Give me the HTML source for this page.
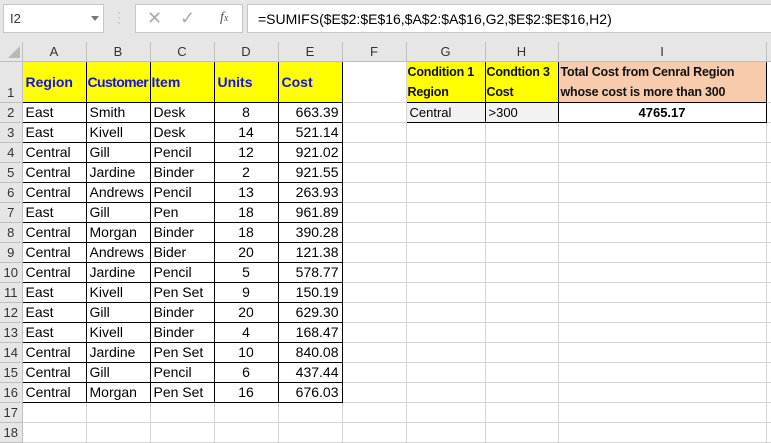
<!DOCTYPE html>
<html><head><meta charset="utf-8"><style>
body{margin:0;width:771px;height:434px;overflow:hidden;background:#fff;font-family:"Liberation Sans",Arial,sans-serif;position:relative}
.top{position:absolute;left:0;top:0;width:771px;height:42px;background:#e6e6e6}
.box{position:absolute;background:#fff;border:1px solid #c6c6c6;box-sizing:border-box}
table{position:absolute;left:0;top:42px;border-collapse:collapse;table-layout:fixed;width:771px}
td{border:1px solid #d4d4d4;padding:0 3px;font-size:14px;height:19px;white-space:nowrap;overflow:hidden;line-height:19px}
tr.h td{background:#e6e6e6;color:#333;text-align:center;font-size:13px;border-color:#bfbfbf;border-top:none}
td.rh{background:#e6e6e6;color:#333;text-align:center;font-size:13px;border-color:#bfbfbf;padding:0;border-left:none}
.b{border:1px solid #000}
.y{background:#ffff00}
.hb{color:#1010ff;font-weight:bold}
.r{text-align:right}.c{text-align:center}
.g{font-weight:bold;font-size:12.5px;line-height:20px;white-space:normal;vertical-align:bottom;color:#111;padding:0 1px;letter-spacing:-0.2px}
</style></head><body>
<div class="top">
 <div class="box" style="left:3px;top:4px;width:101px;height:29px"><span style="position:absolute;left:6px;top:6px;font-size:13px;color:#333">I2</span><span style="position:absolute;left:87px;top:11px;border-left:4px solid transparent;border-right:4px solid transparent;border-top:5px solid #777"></span></div>
 <span style="position:absolute;left:117px;top:10px;color:#aaa;font-size:12px;line-height:5px">·<br>·<br>·</span>
 <div class="box" style="left:135px;top:4px;width:108px;height:29px">
  <span style="position:absolute;left:11px;top:3px;color:#aaa;font-size:18px">✕</span>
  <span style="position:absolute;left:44px;top:3px;color:#aaa;font-size:18px">✓</span>
  <span style="position:absolute;left:84px;top:5px;color:#555;font-size:14px;font-style:italic;font-family:'Liberation Serif',serif">f<span style="font-size:10px">x</span></span>
 </div>
 <div class="box" style="left:247px;top:4px;width:530px;height:29px"><span style="position:absolute;left:10px;top:6px;font-size:14px;color:#000">=SUMIFS($E$2:$E$16,$A$2:$A$16,G2,$E$2:$E$16,H2)</span></div>
</div>
<table>
<colgroup><col style="width:22px"><col style="width:64px"><col style="width:64px"><col style="width:64px"><col style="width:64px"><col style="width:64px"><col style="width:64px"><col style="width:79px"><col style="width:73px"><col style="width:208px"><col style="width:5px"></colgroup>
<tr class="h"><td style="border-left:none;position:relative"><span style="position:absolute;right:2px;bottom:3px;border-left:12px solid transparent;border-bottom:12px solid #b8b8b8"></span></td><td>A</td><td>B</td><td>C</td><td>D</td><td>E</td><td>F</td><td>G</td><td>H</td><td>I</td><td></td></tr>
<tr style="height:40px"><td class="rh" style="vertical-align:bottom">1</td><td class="b y hb">Region</td><td class="b y hb" style="padding:0 0 0 1px;letter-spacing:-0.6px">Customer</td><td class="b y hb" style="padding:0 1px">Item</td><td class="b y hb">Units</td><td class="b y hb">Cost</td><td></td><td class="b y g">Condition&nbsp;1 Region</td><td class="b y g">Condtion&nbsp;3 Cost</td><td class="b g" style="background:#f8cbad;padding-left:2px">Total Cost from Cenral Region whose cost is more than 300</td><td></td></tr>
<tr><td class="rh">2</td><td class="b">East</td><td class="b">Smith</td><td class="b">Desk</td><td class="b c">8</td><td class="b r">663.39</td><td></td><td class="b" style="background:#f2f2f2;font-size:13px">Central</td><td class="b" style="background:#f2f2f2;font-size:13px">&gt;300</td><td class="b c" style="font-weight:bold;font-size:13px">4765.17</td><td></td></tr>
<tr><td class="rh">3</td><td class="b">East</td><td class="b">Kivell</td><td class="b">Desk</td><td class="b c">14</td><td class="b r">521.14</td><td></td><td></td><td></td><td></td><td></td></tr>
<tr><td class="rh">4</td><td class="b">Central</td><td class="b">Gill</td><td class="b">Pencil</td><td class="b c">12</td><td class="b r">921.02</td><td></td><td></td><td></td><td></td><td></td></tr>
<tr><td class="rh">5</td><td class="b">Central</td><td class="b">Jardine</td><td class="b">Binder</td><td class="b c">2</td><td class="b r">921.55</td><td></td><td></td><td></td><td></td><td></td></tr>
<tr><td class="rh">6</td><td class="b">Central</td><td class="b">Andrews</td><td class="b">Pencil</td><td class="b c">13</td><td class="b r">263.93</td><td></td><td></td><td></td><td></td><td></td></tr>
<tr><td class="rh">7</td><td class="b">East</td><td class="b">Gill</td><td class="b">Pen</td><td class="b c">18</td><td class="b r">961.89</td><td></td><td></td><td></td><td></td><td></td></tr>
<tr><td class="rh">8</td><td class="b">Central</td><td class="b">Morgan</td><td class="b">Binder</td><td class="b c">18</td><td class="b r">390.28</td><td></td><td></td><td></td><td></td><td></td></tr>
<tr><td class="rh">9</td><td class="b">Central</td><td class="b">Andrews</td><td class="b">Bider</td><td class="b c">20</td><td class="b r">121.38</td><td></td><td></td><td></td><td></td><td></td></tr>
<tr><td class="rh">10</td><td class="b">Central</td><td class="b">Jardine</td><td class="b">Pencil</td><td class="b c">5</td><td class="b r">578.77</td><td></td><td></td><td></td><td></td><td></td></tr>
<tr><td class="rh">11</td><td class="b">East</td><td class="b">Kivell</td><td class="b">Pen Set</td><td class="b c">9</td><td class="b r">150.19</td><td></td><td></td><td></td><td></td><td></td></tr>
<tr><td class="rh">12</td><td class="b">East</td><td class="b">Gill</td><td class="b">Binder</td><td class="b c">20</td><td class="b r">629.30</td><td></td><td></td><td></td><td></td><td></td></tr>
<tr><td class="rh">13</td><td class="b">East</td><td class="b">Kivell</td><td class="b">Binder</td><td class="b c">4</td><td class="b r">168.47</td><td></td><td></td><td></td><td></td><td></td></tr>
<tr><td class="rh">14</td><td class="b">Central</td><td class="b">Jardine</td><td class="b">Pen Set</td><td class="b c">10</td><td class="b r">840.08</td><td></td><td></td><td></td><td></td><td></td></tr>
<tr><td class="rh">15</td><td class="b">Central</td><td class="b">Gill</td><td class="b">Pencil</td><td class="b c">6</td><td class="b r">437.44</td><td></td><td></td><td></td><td></td><td></td></tr>
<tr><td class="rh">16</td><td class="b">Central</td><td class="b">Morgan</td><td class="b">Pen Set</td><td class="b c">16</td><td class="b r">676.03</td><td></td><td></td><td></td><td></td><td></td></tr>
<tr><td class="rh">17</td><td></td><td></td><td></td><td></td><td></td><td></td><td></td><td></td><td></td><td></td></tr>
<tr><td class="rh">18</td><td></td><td></td><td></td><td></td><td></td><td></td><td></td><td></td><td></td><td></td></tr>
</table>
</body></html>
